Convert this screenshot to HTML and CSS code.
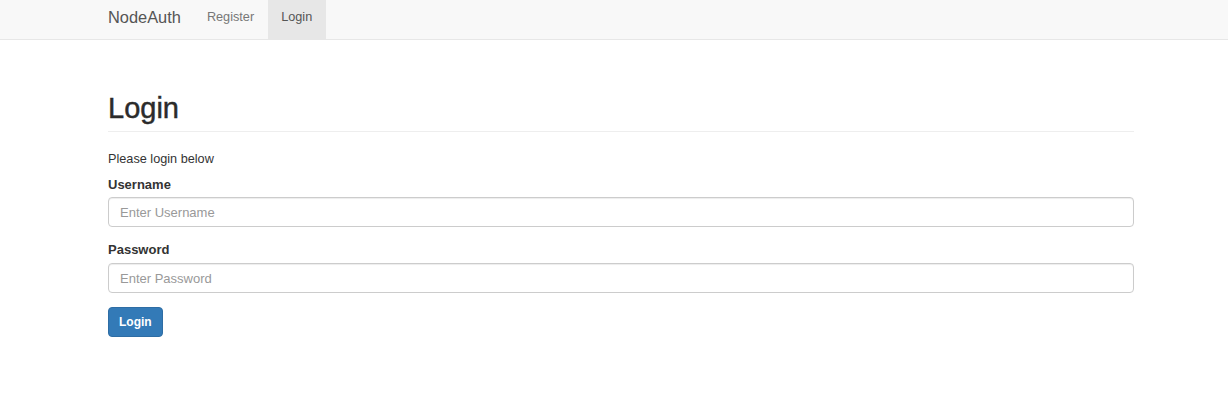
FILE: index.html
```html
<!DOCTYPE html>
<html>
<head>
<meta charset="utf-8">
<title>NodeAuth - Login</title>
<link rel="stylesheet" href="styles.css">
</head>
<body>
<nav class="navbar">
  <div class="container nav-inner">
    <a class="brand" href="#">NodeAuth</a>
    <ul class="nav">
      <li><a class="nav-link" href="#">Register</a></li>
      <li><a class="nav-link active" href="#">Login</a></li>
    </ul>
  </div>
</nav>
<main class="container">
  <h1 class="page-header">Login</h1>
  <p class="intro">Please login below</p>
  <form class="form">
    <div class="form-group">
      <label class="label" for="username">Username</label>
      <input class="input" id="username" type="text" placeholder="Enter Username">
    </div>
    <div class="form-group">
      <label class="label" for="password">Password</label>
      <input class="input" id="password" type="password" placeholder="Enter Password">
    </div>
    <button class="btn" type="submit">Login</button>
  </form>
</main>
</body>
</html>
```

FILE: styles.css
```css
* { box-sizing: border-box; }
html, body { margin: 0; padding: 0; background: #fff; }
body {
  font-family: "Liberation Sans", Arial, Helvetica, sans-serif;
  font-size: 13px;
  line-height: 18px;
  color: #333;
}
.container {
  width: 1026px;
  margin-left: 108px;
}
.navbar {
  height: 40px;
  background: #f8f8f8;
  border-bottom: 1px solid #e7e7e7;
}
.nav-inner {
  display: flex;
  height: 39px;
}
.brand {
  display: block;
  font-size: 16.4px;
  line-height: 20px;
  padding-top: 6.5px;
  color: #555;
  text-decoration: none;
  margin-right: 12.5px;
}
.nav {
  display: flex;
  list-style: none;
  margin: 0;
  padding: 0;
}
.nav-link {
  display: block;
  height: 39px;
  padding: 7.5px 13.5px 0;
  font-size: 12.7px;
  line-height: 18px;
  color: #777;
  text-decoration: none;
}
.nav-link.active {
  background: #e7e7e7;
  color: #555;
}
.page-header {
  margin: 52px 0 0;
  padding-bottom: 6px;
  border-bottom: 1px solid #eee;
  font-size: 29px;
  line-height: 33px;
  font-weight: normal;
  -webkit-text-stroke: 0.45px #2b2b2b;
  color: #2b2b2b;
}
.intro {
  margin: 18px 0 8px;
  font-size: 12.7px;
}
.form-group {
  margin-bottom: 14px;
}
.label {
  display: block;
  font-weight: bold;
  margin-bottom: 3px;
}
.form-group + .form-group .label {
  margin-bottom: 4px;
}
.input {
  display: block;
  width: 100%;
  height: 30px;
  padding: 4px 11px;
  font-family: inherit;
  font-size: 13px;
  color: #555;
  background: #fff;
  border: 1px solid #ccc;
  border-radius: 4px;
  box-shadow: inset 0 1px 1px rgba(0,0,0,0.075);
}
.input::placeholder { color: #999; }
.btn {
  display: block;
  height: 30px;
  padding: 0 10px;
  font-family: inherit;
  font-size: 12px;
  font-weight: bold;
  color: #fff;
  background: #337ab7;
  border: 1px solid #2e6da4;
  border-radius: 4px;
}
```
